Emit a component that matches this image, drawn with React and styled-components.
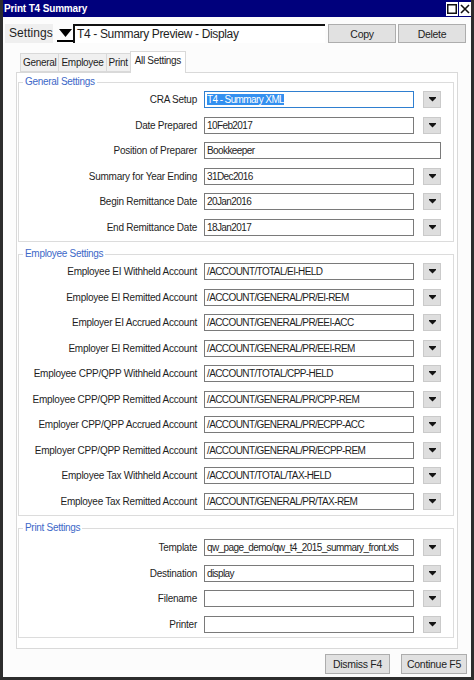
import React from 'react';
import styled, { createGlobalStyle } from 'styled-components';

const GlobalStyle = createGlobalStyle`
  html, body {
    margin: 0;
    padding: 0;
    background: #2d2d2d;
  }
  * {
    box-sizing: border-box;
  }
`;

const Window = styled.div`
  width: 474px;
  height: 680px;
  display: flex;
  flex-direction: column;
  border: 3px solid #2d2d2d;
  border-top: 0;
  background: #fcfcfc;
  font-family: "Liberation Sans", Arial, sans-serif;
  color: #1e1e1e;
`;

const TitleBar = styled.div`
  height: 17px;
  flex: none;
  display: flex;
  align-items: center;
  background: #00007c;
  padding: 0 0 0 1px;
`;

const TitleText = styled.div`
  flex: 1;
  color: #fff;
  font-weight: bold;
  font-size: 10px;
  letter-spacing: -0.15px;
`;

const TitleButton = styled.div`
  width: 12px;
  height: 14px;
  margin-left: 1px;
  background: #fff;
  display: flex;
  align-items: center;
  justify-content: center;
`;

const Body = styled.div`
  flex: 1;
  display: flex;
  flex-direction: column;
  padding: 7px 4px 0 2px;
`;

const SettingsRow = styled.div`
  display: flex;
  align-items: stretch;
  height: 19px;
`;

const SettingsLabel = styled.div`
  width: 48px;
  background: #efefef;
  padding-left: 4px;
  font-size: 12px;
  letter-spacing: 0.05px;
  line-height: 19px;
  margin-right: 4px;
`;

const SettingsDrop = styled.div`
  width: 16px;
  display: flex;
  align-items: center;
  justify-content: center;
  border-bottom: 2px solid #000;
  margin-bottom: 1px;
  padding-top: 2px;
`;

const SettingsField = styled.div`
  width: 252px;
  background: #fff;
  border-top: 2px solid #111;
  border-left: 2px solid #111;
  padding-left: 2px;
  font-size: 12px;
  letter-spacing: -0.35px;
  line-height: 16px;
  margin-right: 3px;
`;

const Button = styled.button`
  width: ${p => p.$w}px;
  height: ${p => (p.$h ? p.$h : 19)}px;
  margin-left: ${p => p.$ml || 0}px;
  padding: 0;
  background: #e1e1e1;
  border: 1px solid #adadad;
  font-family: "Liberation Sans", Arial, sans-serif;
  font-size: 10.5px;
  letter-spacing: -0.3px;
  color: #1e1e1e;
`;

const TabStrip = styled.div`
  display: flex;
  align-items: flex-end;
  margin-top: 8px;
  padding-left: 15px;
  height: 21px;
  position: relative;
  z-index: 1;
`;

const Tab = styled.div`
  height: ${p => (p.$active ? 22 : 19)}px;
  padding: 0 ${p => (p.$active ? 4 : 2)}px;
  margin-bottom: ${p => (p.$active ? -1 : 0)}px;
  background: ${p => (p.$active ? '#fff' : '#f0f0f0')};
  border: 1px solid #d9d9d9;
  border-bottom: ${p => (p.$active ? 'none' : '1px solid #d9d9d9')};
  border-right: ${p => (p.$active ? '1px solid #d9d9d9' : 'none')};
  font-size: 10px;
  letter-spacing: -0.3px;
  line-height: ${p => (p.$active ? 18 : 17)}px;
`;

const Panel = styled.div`
  margin-left: 11px;
  width: 442px;
  height: 577px;
  flex: none;
  background: #fff;
  border: 1px solid #d9d9d9;
  padding: 9px 3px 10px 1px;
  display: flex;
  flex-direction: column;
  gap: 12px;
`;

const Group = styled.div`
  position: relative;
  border: 1px solid #dcdcdc;
  padding: ${p => p.$pt}px 0 ${p => p.$pb}px 0;
`;

const GroupTitle = styled.div`
  position: absolute;
  top: -7px;
  left: 4px;
  padding: 0 2px;
  background: #fff;
  color: #3d68c8;
  font-size: 10px;
  letter-spacing: -0.3px;
  line-height: 12px;
`;

const Row = styled.div`
  height: 25.5px;
  display: flex;
  align-items: center;
`;

const Label = styled.div`
  width: 178px;
  margin-right: 7px;
  text-align: right;
  font-size: 10px;
  letter-spacing: -0.25px;
  white-space: nowrap;
`;

const Field = styled.div`
  width: ${p => (p.$wide ? 237 : 210)}px;
  height: 17px;
  border: 1px solid ${p => (p.$focus ? '#2f7fd0' : '#7a7a7a')};
  background: #fff;
  padding-left: 2px;
  font-size: 10px;
  letter-spacing: -0.6px;
  line-height: 15px;
  white-space: nowrap;
  overflow: hidden;
`;

const Selected = styled.span`
  background: #3390f0;
  color: #fff;
`;

const DropButton = styled.div`
  width: 18px;
  height: 17px;
  margin-left: 9px;
  background: #dedede;
  border: 1px solid #cacaca;
  display: flex;
  align-items: center;
  justify-content: center;
`;

const Footer = styled.div`
  display: flex;
  justify-content: flex-end;
  gap: 11px;
  margin-top: 5px;
`;

const Chevron = () => (
  <svg width="7" height="5" viewBox="0 0 7 5">
    <path d="M0 0 H7 V1 L3.5 4.5 L0 1 Z" fill="#151515" />
  </svg>
);

const Drop = () => (
  <DropButton>
    <Chevron />
  </DropButton>
);

function FieldRow({ label, value, drop = true, focus }) {
  return (
    <Row>
      <Label>{label}</Label>
      <Field $wide={!drop} $focus={focus}>
        {focus ? <Selected>{value}</Selected> : value}
      </Field>
      {drop && <Drop />}
    </Row>
  );
}

const general = [
  { label: 'CRA Setup', value: 'T4 - Summary XML', focus: true },
  { label: 'Date Prepared', value: '10Feb2017' },
  { label: 'Position of Preparer', value: 'Bookkeeper', drop: false },
  { label: 'Summary for Year Ending', value: '31Dec2016' },
  { label: 'Begin Remittance Date', value: '20Jan2016' },
  { label: 'End Remittance Date', value: '18Jan2017' },
];

const employee = [
  { label: 'Employee EI Withheld Account', value: '/ACCOUNT/TOTAL/EI-HELD' },
  { label: 'Employee EI Remitted Account', value: '/ACCOUNT/GENERAL/PR/EI-REM' },
  { label: 'Employer EI Accrued Account', value: '/ACCOUNT/GENERAL/PR/EEI-ACC' },
  { label: 'Employer EI Remitted Account', value: '/ACCOUNT/GENERAL/PR/EEI-REM' },
  { label: 'Employee CPP/QPP Withheld Account', value: '/ACCOUNT/TOTAL/CPP-HELD' },
  { label: 'Employee CPP/QPP Remitted Account', value: '/ACCOUNT/GENERAL/PR/CPP-REM' },
  { label: 'Employer CPP/QPP Accrued Account', value: '/ACCOUNT/GENERAL/PR/ECPP-ACC' },
  { label: 'Employer CPP/QPP Remitted Account', value: '/ACCOUNT/GENERAL/PR/ECPP-REM' },
  { label: 'Employee Tax Withheld Account', value: '/ACCOUNT/TOTAL/TAX-HELD' },
  { label: 'Employee Tax Remitted Account', value: '/ACCOUNT/GENERAL/PR/TAX-REM' },
];

const print = [
  { label: 'Template', value: 'qw_page_demo/qw_t4_2015_summary_front.xls' },
  { label: 'Destination', value: 'display' },
  { label: 'Filename', value: '' },
  { label: 'Printer', value: '' },
];

export default function App() {
  return (
    <>
      <GlobalStyle />
      <Window>
        <TitleBar>
          <TitleText>Print T4 Summary</TitleText>
          <TitleButton>
            <svg width="10" height="10" viewBox="0 0 10 10">
              <rect x="0.75" y="0.75" width="8.5" height="8.5" fill="none" stroke="#111" strokeWidth="1.5" />
            </svg>
          </TitleButton>
          <TitleButton>
            <svg width="10" height="10" viewBox="0 0 10 10">
              <path d="M1 1 L9 9 M9 1 L1 9" stroke="#111" strokeWidth="1.6" />
            </svg>
          </TitleButton>
        </TitleBar>
        <Body>
          <SettingsRow>
            <SettingsLabel>Settings</SettingsLabel>
            <SettingsDrop>
              <svg width="13" height="8" viewBox="0 0 13 8">
                <path d="M0 0 H13 L6.5 8 Z" fill="#000" />
              </svg>
            </SettingsDrop>
            <SettingsField>T4 - Summary Preview - Display</SettingsField>
            <Button $w={68}>Copy</Button>
            <Button $w={68} $ml={2}>Delete</Button>
          </SettingsRow>
          <TabStrip>
            <Tab>General</Tab>
            <Tab>Employee</Tab>
            <Tab>Print</Tab>
            <Tab $active>All Settings</Tab>
          </TabStrip>
          <Panel>
            <Group $pt={4} $pb={1}>
              <GroupTitle>General Settings</GroupTitle>
              {general.map(r => (
                <FieldRow key={r.label} {...r} />
              ))}
            </Group>
            <Group $pt={4} $pb={1}>
              <GroupTitle>Employee Settings</GroupTitle>
              {employee.map(r => (
                <FieldRow key={r.label} {...r} />
              ))}
            </Group>
            <Group $pt={6} $pb={0}>
              <GroupTitle>Print Settings</GroupTitle>
              {print.map(r => (
                <FieldRow key={r.label} {...r} />
              ))}
            </Group>
          </Panel>
          <Footer>
            <Button $w={65} $h={20}>Dismiss F4</Button>
            <Button $w={66} $h={20}>Continue F5</Button>
          </Footer>
        </Body>
      </Window>
    </>
  );
}
